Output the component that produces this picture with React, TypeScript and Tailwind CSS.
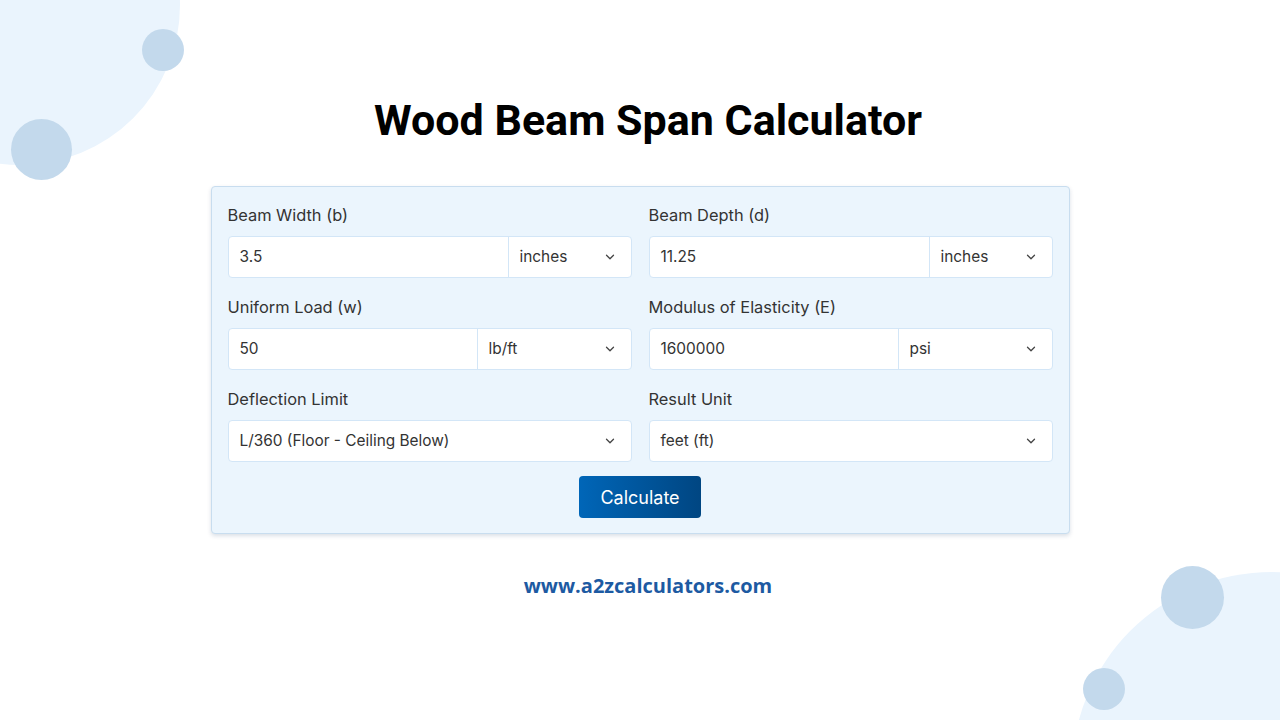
import React from "react";

const Chevron = () => (
  <svg width="14" height="14" viewBox="0 0 24 24" fill="none" stroke="#444" strokeWidth="2.2" strokeLinecap="round" strokeLinejoin="round">
    <path d="m6 9 6 6 6-6" />
  </svg>
);

function Group({ label, value, unit, unitW }: { label: string; value: string; unit: string; unitW: string }) {
  return (
    <div className="flex flex-col">
      <div className="text-[16.4px] leading-6 text-[#333] mb-[9px]">{label}</div>
      <div className="flex h-[42px] rounded border border-[#d3e6f7] bg-white">
        <div className="flex-1 flex items-center pl-[11px] text-[15.4px] text-[#333]">{value}</div>
        <div className={`${unitW} flex items-center justify-between border-l border-[#d3e6f7] pl-[11px] pr-[14px] text-[15.4px] text-[#333]`}>
          <span>{unit}</span>
          <Chevron />
        </div>
      </div>
    </div>
  );
}

function Sel({ label, value }: { label: string; value: string }) {
  return (
    <div className="flex flex-col">
      <div className="text-[16.4px] leading-6 text-[#333] mb-[9px]">{label}</div>
      <div className="flex h-[42px] items-center justify-between rounded border border-[#d3e6f7] bg-white pl-[11px] pr-[14px] text-[15.4px] text-[#333]">
        <span>{value}</span>
        <Chevron />
      </div>
    </div>
  );
}

export default function App() {
  return (
    <div className="relative w-full h-[720px] overflow-hidden bg-white" style={{ fontFamily: "Inter, 'Noto Sans', sans-serif" }}>
      <div className="absolute left-[-140px] top-[-155px] w-[320px] h-[320px] rounded-full bg-[#eaf4fd]" />
      <div className="absolute left-[142px] top-[29px] w-[42px] h-[42px] rounded-full bg-[#c3d9ec]" />
      <div className="absolute left-[11px] top-[119px] w-[61px] h-[61px] rounded-full bg-[#c3d9ec]" />
      <div className="absolute left-[1072px] top-[572px] w-[400px] h-[400px] rounded-full bg-[#eaf4fd]" />
      <div className="absolute left-[1161px] top-[566px] w-[63px] h-[63px] rounded-full bg-[#c3d9ec]" />
      <div className="absolute left-[1083px] top-[668px] w-[42px] h-[42px] rounded-full bg-[#c3d9ec]" />

      <div className="relative flex flex-col items-center pt-[96px]">
        <h1 className="ml-[16px] text-[43px] leading-[48px] font-bold text-black" style={{ fontFamily: "Roboto, sans-serif" }}>
          Wood Beam Span Calculator
        </h1>
        <div className="mt-[42px] w-[859px] rounded border border-[#c8ddef] bg-[#ebf5fd] px-4 pt-4 pb-[15px] shadow-[0_2px_4px_rgba(0,40,90,0.15)]">
          <div className="grid grid-cols-2 gap-x-[17px] gap-y-[17px]">
            <Group label="Beam Width (b)" value="3.5" unit="inches" unitW="w-[123px]" />
            <Group label="Beam Depth (d)" value="11.25" unit="inches" unitW="w-[123px]" />
            <Group label="Uniform Load (w)" value="50" unit="lb/ft" unitW="w-[154px]" />
            <Group label="Modulus of Elasticity (E)" value="1600000" unit="psi" unitW="w-[154px]" />
            <Sel label="Deflection Limit" value="L/360 (Floor - Ceiling Below)" />
            <Sel label="Result Unit" value="feet (ft)" />
          </div>
          <div className="flex justify-center mt-[14px]">
            <button className="h-[42px] w-[122px] rounded-[4px] bg-gradient-to-r from-[#0066b8] to-[#004682] text-white text-[18px]">
              Calculate
            </button>
          </div>
        </div>
        <div className="ml-[16px] mt-[38px] text-[20px] leading-7 font-bold text-[#1d5aa2]" style={{ fontFamily: "'Open Sans', sans-serif" }}>
          www.a2zcalculators.com
        </div>
      </div>
    </div>
  );
}
